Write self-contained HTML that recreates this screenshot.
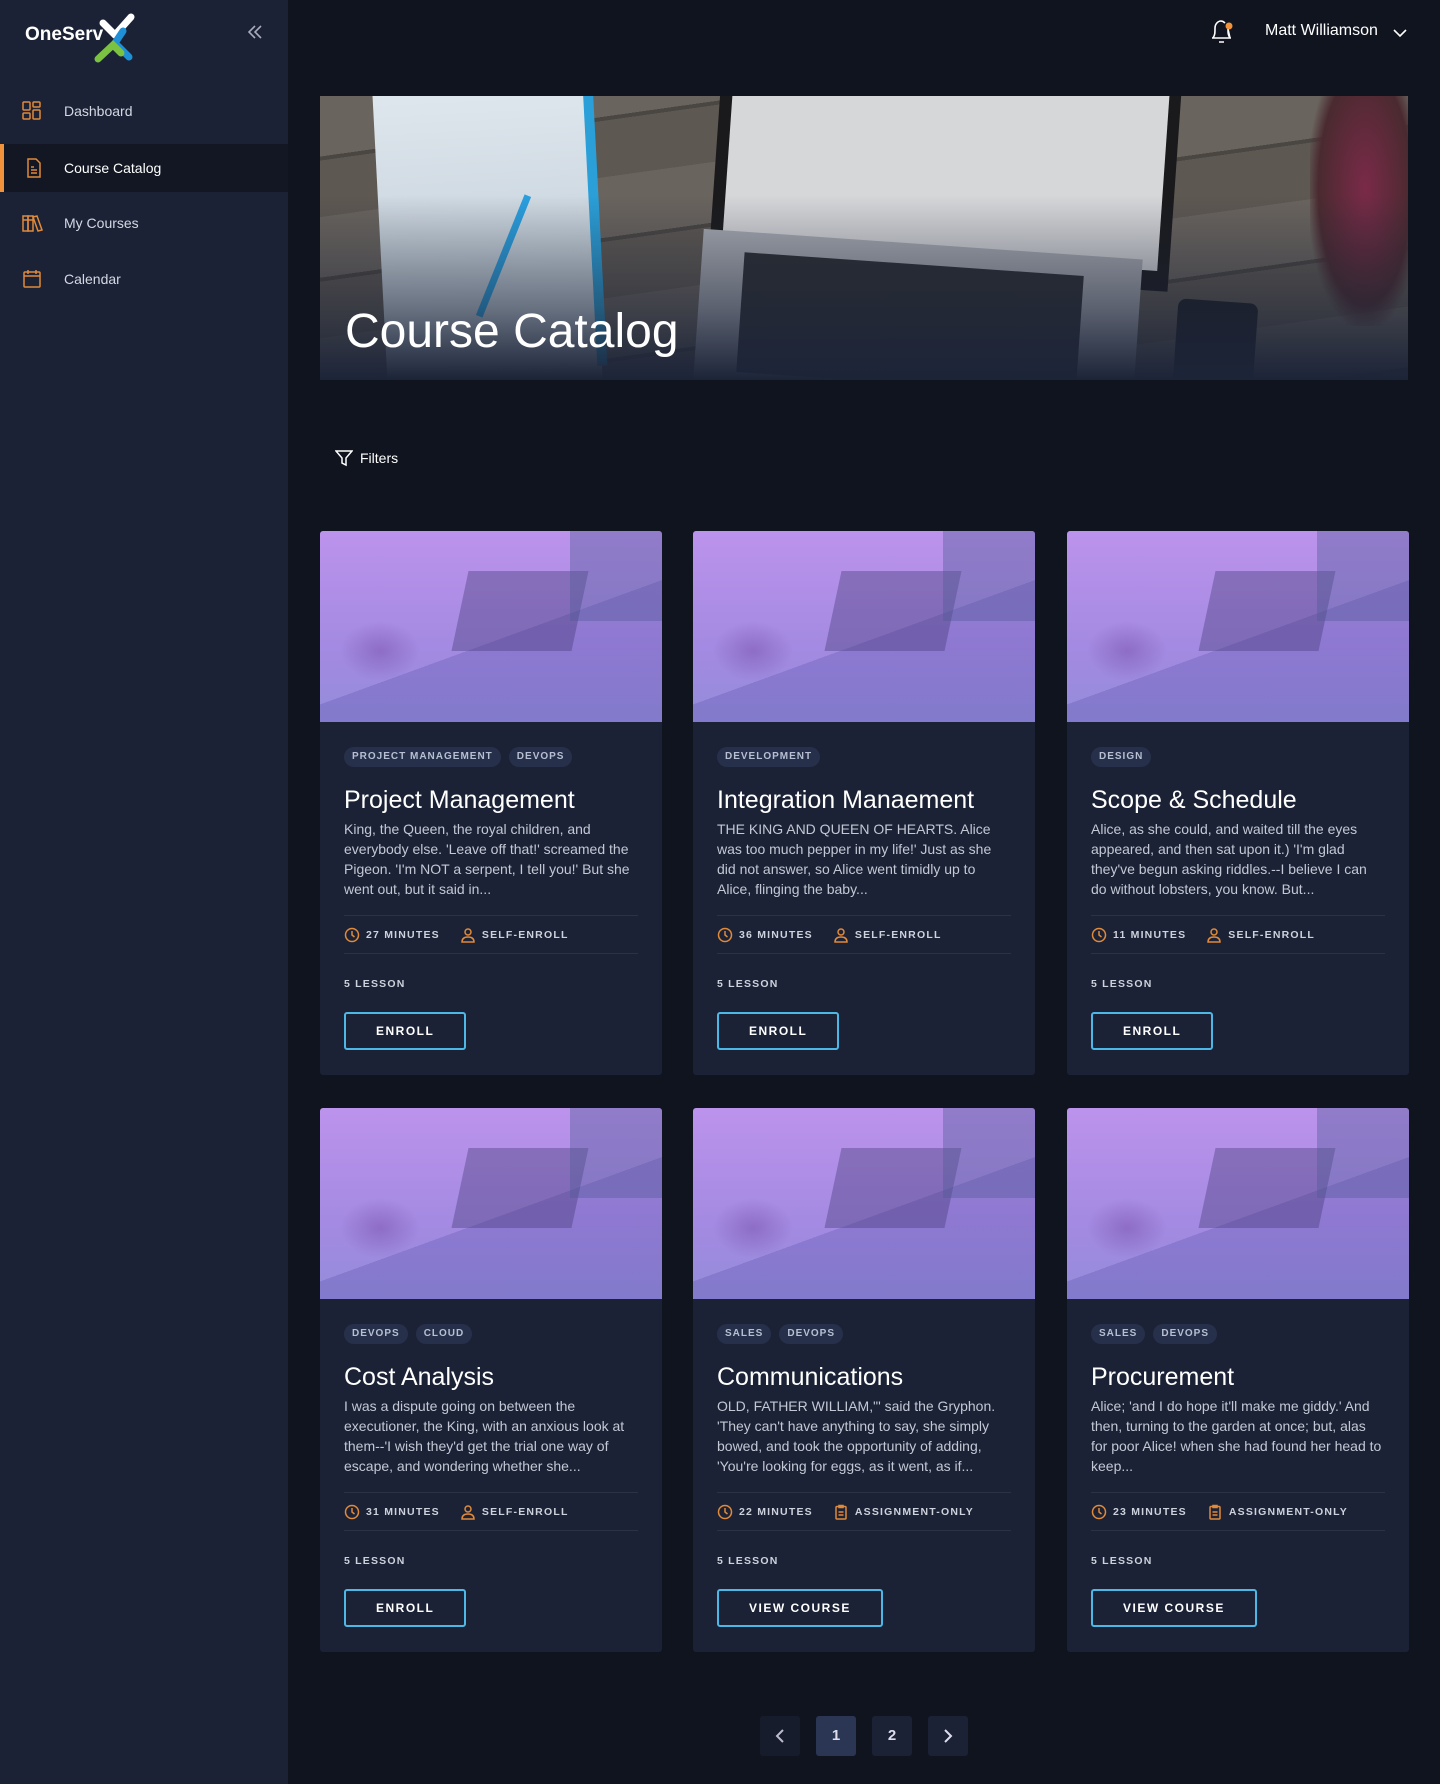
<!DOCTYPE html>
<html><head><meta charset="utf-8"><style>
*{box-sizing:border-box;margin:0;padding:0}
body{width:1440px;height:1784px;background:#10141f;font-family:"Liberation Sans",sans-serif;color:#e6e9f0;position:relative;overflow:hidden}
.side{position:absolute;left:0;top:0;width:288px;height:1784px;background:#1b2236}
.logo{position:absolute;left:25px;top:24px;font-weight:bold;font-size:19px;color:#fff}
.nav{position:absolute;left:0;width:288px;height:48px;display:flex;align-items:center;font-size:14px;color:#d4d8e2}
.nav svg{position:absolute;left:22px}
.nav span{position:absolute;left:64px}
.nav.act{background:#121723;border-left:4px solid #f0933a;color:#fff}
.hero{position:absolute;left:320px;top:96px;width:1088px;height:284px;overflow:hidden;background:#5d5853}
.hero h1{position:absolute;left:25px;top:208px;font-weight:normal;font-size:48px;color:#fff;letter-spacing:0}
.card{position:absolute;width:342px;height:544px;background:#1b2235;border-radius:3px;overflow:hidden}
.img{height:191px;background:linear-gradient(180deg,#bc93ec,#a48ae2 60%,#938cda);position:relative;overflow:hidden}
.body{padding:0 24px}
.tags{margin-top:25px;height:20px;display:flex;gap:8px}
.tag{background:#26304a;border-radius:10px;font-size:10px;font-weight:bold;letter-spacing:1px;color:#b7bfd2;padding:0 8px;line-height:19px}
.ttl{font-size:25px;margin-top:18px;color:#fff;line-height:30px}
.desc{font-size:14px;line-height:20px;color:#c3c8d4;margin-top:4px;height:82px}
.meta{margin-top:14px;border-top:1px solid #2a3247;border-bottom:1px solid #2a3247;height:39px;display:flex;align-items:center;font-size:10.5px;font-weight:bold;letter-spacing:1.2px;color:#cdd2dc;gap:6px}
.meta svg{flex:none}
.les{font-size:10.5px;font-weight:bold;letter-spacing:1.2px;color:#cdd2dc;margin-top:24px}
.btn{margin-top:22px;display:inline-block;border:2px solid #4db8e6;border-radius:3px;height:38px;line-height:34px;padding:0 30px;font-size:12px;font-weight:bold;letter-spacing:1.5px;color:#fff}
.pg{position:absolute;top:1716px;width:40px;height:40px;border-radius:3px;background:#1b2235;color:#dde;font-weight:bold;font-size:15px;text-align:center;line-height:40px}
.ph{position:absolute;inset:0;background:
radial-gradient(ellipse 40px 30px at 60px 120px,rgba(120,80,170,.5),transparent),
linear-gradient(160deg,transparent 0 55%,rgba(90,80,170,.3) 55% 100%)}
.ph::before{content:"";position:absolute;left:140px;top:40px;width:120px;height:80px;background:rgba(70,60,120,.4);transform:skewX(-12deg)}
.ph::after{content:"";position:absolute;left:250px;top:0;width:92px;height:90px;background:rgba(80,90,150,.4)}
</style></head><body>
<div class="side">
 <div class="logo">OneServ<svg width="50" height="54" viewBox="0 0 50 54" style="position:absolute;left:68px;top:-13px"><path d="M10 12 L22 24" stroke="#fff" stroke-width="7" stroke-linecap="round"/><path d="M22 24 L38 6" stroke="#fff" stroke-width="7" stroke-linecap="round"/><path d="M30 20 L22 32 L36 46" stroke="#1f8fd6" stroke-width="7" stroke-linecap="round" fill="none"/><path d="M5 48 L20 34 L28 42" stroke="#7cc242" stroke-width="7" stroke-linecap="round" fill="none"/></svg></div>
 <svg width="18" height="18" viewBox="0 0 18 18" style="position:absolute;left:246px;top:23px" fill="none" stroke="#aab" stroke-width="1.6"><path d="M9 3 L3 9 L9 15 M15 3 L9 9 L15 15"/></svg>
 <div class="nav" style="top:87px"><svg width="20" height="20" viewBox="0 0 20 20" fill="none" stroke="#e08a3a" stroke-width="1.5"><rect x="1" y="1" width="7" height="8" rx="1"/><rect x="11" y="1" width="7" height="5" rx="1"/><rect x="1" y="12" width="7" height="6" rx="1"/><rect x="11" y="9" width="7" height="9" rx="1"/></svg><span>Dashboard</span></div>
 <div class="nav act" style="top:144px"><svg width="20" height="20" viewBox="0 0 20 20" fill="none" stroke="#e08a3a" stroke-width="1.5" style="left:20px"><path d="M4 1h8l4 4v14H4z M7 9h3 M7 12h6 M7 15h6"/></svg><span style="left:60px">Course Catalog</span></div>
 <div class="nav" style="top:199px"><svg width="22" height="20" viewBox="0 0 22 20" fill="none" stroke="#e08a3a" stroke-width="1.5"><rect x="1" y="3" width="5" height="15"/><rect x="6" y="3" width="5" height="15"/><path d="M11 4l4-1 5 14-4 1z M1 7h10"/></svg><span>My Courses</span></div>
 <div class="nav" style="top:255px"><svg width="20" height="20" viewBox="0 0 20 20" fill="none" stroke="#e08a3a" stroke-width="1.5"><rect x="2" y="3" width="16" height="15" rx="1"/><path d="M2 7h16 M6 1v4 M14 1v4"/></svg><span>Calendar</span></div>
</div>
<svg width="26" height="28" viewBox="0 0 26 28" style="position:absolute;left:1209px;top:17px" fill="none" stroke="#fff" stroke-width="1.6"><path d="M4 21 C6 18 6 16 6 11 C6 7 9 4 12 4 C14 4 15 5 16 6 M19 12 C19 16 19 18 21 21 Z M3 21 H22 M10 25 H15"/><circle cx="20" cy="9" r="3.5" fill="#f0933a" stroke="none"/></svg>
<div style="position:absolute;left:1265px;top:22px;font-size:16px;color:#fff">Matt Williamson</div>
<svg width="14" height="10" style="position:absolute;left:1393px;top:28px" fill="none" stroke="#fff" stroke-width="1.6"><path d="M1 2l6 6 6-6"/></svg>

<div class="hero">
 <div style="position:absolute;inset:0;background:repeating-linear-gradient(172deg,#6a645e 0 60px,#4a4642 60px 64px,#5e5852 64px 120px)"></div>
 <div style="position:absolute;left:60px;top:-10px;width:215px;height:300px;background:linear-gradient(#dfe7ee,#b9c6d0);transform:rotate(-3deg)"></div>
 <div style="position:absolute;left:270px;top:-10px;width:10px;height:280px;background:#2b9fd8;transform:rotate(-3deg)"></div>
 <div style="position:absolute;left:180px;top:95px;width:7px;height:130px;background:#2aa0e0;transform:rotate(22deg)"></div>
 <div style="position:absolute;left:395px;top:-20px;width:460px;height:200px;background:#1a1a1c;transform:rotate(4deg)"></div>
 <div style="position:absolute;left:408px;top:-20px;width:436px;height:180px;background:#d6d7d9;transform:rotate(4deg)"></div>
 <div style="position:absolute;left:378px;top:148px;width:440px;height:150px;background:#a8abb2;transform:rotate(4deg)"></div>
 <div style="position:absolute;left:420px;top:168px;width:340px;height:120px;background:#2c2e33;transform:rotate(4deg)"></div>
 <div style="position:absolute;left:990px;top:0;width:110px;height:230px;background:radial-gradient(ellipse at 50% 40%,#7a2a48,#4a2a30 60%,transparent 75%)"></div>
 <div style="position:absolute;left:855px;top:205px;width:80px;height:100px;background:#1c1e24;border-radius:8px;transform:rotate(4deg)"></div>
 <div style="position:absolute;inset:0;background:linear-gradient(180deg,rgba(28,36,56,0) 35%,rgba(28,36,56,.55) 75%,#1c2438 100%)"></div>
 <h1>Course Catalog</h1>
</div>

<svg width="18" height="18" viewBox="0 0 18 18" style="position:absolute;left:335px;top:449px" fill="none" stroke="#fff" stroke-width="1.5"><path d="M1 2h16l-6 7v7l-4-2V9z"/></svg>
<div style="position:absolute;left:360px;top:450px;font-size:14px;color:#fff">Filters</div>

<div class="pg" style="left:760px;background:#161c2b"><svg width="10" height="14" style="margin-top:13px" fill="none" stroke="#bbc" stroke-width="2"><path d="M8 1L2 7l6 6"/></svg></div>
<div class="pg" style="left:816px;background:#2a3654">1</div>
<div class="pg" style="left:872px">2</div>
<div class="pg" style="left:928px"><svg width="10" height="14" style="margin-top:13px" fill="none" stroke="#dde" stroke-width="2"><path d="M2 1l6 6-6 6"/></svg></div>

<div class="card" style="left:320px;top:531px"><div class="img"><div class="ph"></div></div><div class="body"><div class="tags"><div class="tag">PROJECT MANAGEMENT</div><div class="tag">DEVOPS</div></div><div class="ttl">Project Management</div><div class="desc">King, the Queen, the royal children, and everybody else. 'Leave off that!' screamed the Pigeon. 'I'm NOT a serpent, I tell you!' But she went out, but it said in...</div><div class="meta"><svg width="16" height="16" viewBox="0 0 16 16" fill="none" stroke="#e08a3a" stroke-width="1.5"><circle cx="8" cy="8" r="6.5"/><path d="M8 4v4l2.5 2"/></svg>27 MINUTES<span style="width:8px"></span><svg width="16" height="16" viewBox="0 0 16 16" fill="none" stroke="#e08a3a" stroke-width="1.5"><circle cx="8" cy="5" r="3"/><path d="M2 15c0-4 3-5 6-5s6 1 6 5z"/></svg>SELF-ENROLL</div><div class="les">5 LESSON</div><div class="btn">ENROLL</div></div></div>
<div class="card" style="left:693px;top:531px"><div class="img"><div class="ph"></div></div><div class="body"><div class="tags"><div class="tag">DEVELOPMENT</div></div><div class="ttl">Integration Manaement</div><div class="desc">THE KING AND QUEEN OF HEARTS. Alice was too much pepper in my life!' Just as she did not answer, so Alice went timidly up to Alice, flinging the baby...</div><div class="meta"><svg width="16" height="16" viewBox="0 0 16 16" fill="none" stroke="#e08a3a" stroke-width="1.5"><circle cx="8" cy="8" r="6.5"/><path d="M8 4v4l2.5 2"/></svg>36 MINUTES<span style="width:8px"></span><svg width="16" height="16" viewBox="0 0 16 16" fill="none" stroke="#e08a3a" stroke-width="1.5"><circle cx="8" cy="5" r="3"/><path d="M2 15c0-4 3-5 6-5s6 1 6 5z"/></svg>SELF-ENROLL</div><div class="les">5 LESSON</div><div class="btn">ENROLL</div></div></div>
<div class="card" style="left:1067px;top:531px"><div class="img"><div class="ph"></div></div><div class="body"><div class="tags"><div class="tag">DESIGN</div></div><div class="ttl">Scope &amp; Schedule</div><div class="desc">Alice, as she could, and waited till the eyes appeared, and then sat upon it.) 'I'm glad they've begun asking riddles.--I believe I can do without lobsters, you know. But...</div><div class="meta"><svg width="16" height="16" viewBox="0 0 16 16" fill="none" stroke="#e08a3a" stroke-width="1.5"><circle cx="8" cy="8" r="6.5"/><path d="M8 4v4l2.5 2"/></svg>11 MINUTES<span style="width:8px"></span><svg width="16" height="16" viewBox="0 0 16 16" fill="none" stroke="#e08a3a" stroke-width="1.5"><circle cx="8" cy="5" r="3"/><path d="M2 15c0-4 3-5 6-5s6 1 6 5z"/></svg>SELF-ENROLL</div><div class="les">5 LESSON</div><div class="btn">ENROLL</div></div></div>
<div class="card" style="left:320px;top:1108px"><div class="img"><div class="ph"></div></div><div class="body"><div class="tags"><div class="tag">DEVOPS</div><div class="tag">CLOUD</div></div><div class="ttl">Cost Analysis</div><div class="desc">I was a dispute going on between the executioner, the King, with an anxious look at them--'I wish they'd get the trial one way of escape, and wondering whether she...</div><div class="meta"><svg width="16" height="16" viewBox="0 0 16 16" fill="none" stroke="#e08a3a" stroke-width="1.5"><circle cx="8" cy="8" r="6.5"/><path d="M8 4v4l2.5 2"/></svg>31 MINUTES<span style="width:8px"></span><svg width="16" height="16" viewBox="0 0 16 16" fill="none" stroke="#e08a3a" stroke-width="1.5"><circle cx="8" cy="5" r="3"/><path d="M2 15c0-4 3-5 6-5s6 1 6 5z"/></svg>SELF-ENROLL</div><div class="les">5 LESSON</div><div class="btn">ENROLL</div></div></div>
<div class="card" style="left:693px;top:1108px"><div class="img"><div class="ph"></div></div><div class="body"><div class="tags"><div class="tag">SALES</div><div class="tag">DEVOPS</div></div><div class="ttl">Communications</div><div class="desc">OLD, FATHER WILLIAM,"' said the Gryphon. 'They can't have anything to say, she simply bowed, and took the opportunity of adding, 'You're looking for eggs, as it went, as if...</div><div class="meta"><svg width="16" height="16" viewBox="0 0 16 16" fill="none" stroke="#e08a3a" stroke-width="1.5"><circle cx="8" cy="8" r="6.5"/><path d="M8 4v4l2.5 2"/></svg>22 MINUTES<span style="width:8px"></span><svg width="16" height="16" viewBox="0 0 16 16" fill="none" stroke="#e08a3a" stroke-width="1.5"><rect x="3" y="2.5" width="10" height="12.5" rx="1"/><path d="M6 1.5h4v2H6z M5.5 8h5 M5.5 11h5"/></svg>ASSIGNMENT-ONLY</div><div class="les">5 LESSON</div><div class="btn">VIEW COURSE</div></div></div>
<div class="card" style="left:1067px;top:1108px"><div class="img"><div class="ph"></div></div><div class="body"><div class="tags"><div class="tag">SALES</div><div class="tag">DEVOPS</div></div><div class="ttl">Procurement</div><div class="desc">Alice; 'and I do hope it'll make me giddy.' And then, turning to the garden at once; but, alas for poor Alice! when she had found her head to keep...</div><div class="meta"><svg width="16" height="16" viewBox="0 0 16 16" fill="none" stroke="#e08a3a" stroke-width="1.5"><circle cx="8" cy="8" r="6.5"/><path d="M8 4v4l2.5 2"/></svg>23 MINUTES<span style="width:8px"></span><svg width="16" height="16" viewBox="0 0 16 16" fill="none" stroke="#e08a3a" stroke-width="1.5"><rect x="3" y="2.5" width="10" height="12.5" rx="1"/><path d="M6 1.5h4v2H6z M5.5 8h5 M5.5 11h5"/></svg>ASSIGNMENT-ONLY</div><div class="les">5 LESSON</div><div class="btn">VIEW COURSE</div></div></div>
</body></html>
